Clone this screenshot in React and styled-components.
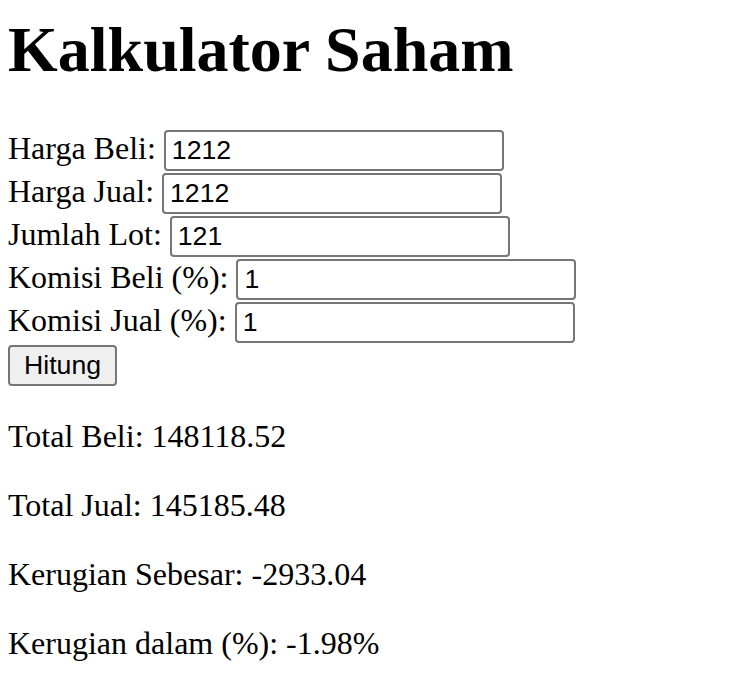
import React, { useState } from "react";
import styled, { createGlobalStyle } from "styled-components";

const GlobalStyle = createGlobalStyle`
    body {
        margin: 0;
        background: #ffffff;
        color: #000000;
        font-family: "Liberation Serif", "Times New Roman", serif;
    }
`;

const hitungSaham = (v) => {
    const beli = parseFloat(v.hargaBeli) || 0;
    const jual = parseFloat(v.hargaJual) || 0;
    const lot = parseFloat(v.jumlahLot) || 0;
    const kBeli = parseFloat(v.komisiBeli) || 0;
    const kJual = parseFloat(v.komisiJual) || 0;

    const totalBeli = beli * lot * (1 + kBeli / 100);
    const totalJual = jual * lot * (1 - kJual / 100);
    const selisih = totalJual - totalBeli;
    const persen = totalBeli ? (selisih / totalBeli) * 100 : 0;

    return { totalBeli, totalJual, selisih, persen };
};

const fields = [
    { name: "hargaBeli", label: "Harga Beli:" },
    { name: "hargaJual", label: "Harga Jual:" },
    { name: "jumlahLot", label: "Jumlah Lot:" },
    { name: "komisiBeli", label: "Komisi Beli (%):" },
    { name: "komisiJual", label: "Komisi Jual (%):" },
];

const initial = {
    hargaBeli: "1212",
    hargaJual: "1212",
    jumlahLot: "121",
    komisiBeli: "1",
    komisiJual: "1",
};

const App = () => {
    const [values, setValues] = useState(initial);
    const [hasil, setHasil] = useState(hitungSaham(initial));

    const handleChange = (e) => {
        setValues({ ...values, [e.target.name]: e.target.value });
    };

    const handleSubmit = (e) => {
        e.preventDefault();
        setHasil(hitungSaham(values));
    };

    const untung = hasil.selisih >= 0;

    return (
        <Page>
            <GlobalStyle />
            <Title>Kalkulator Saham</Title>

            <form onSubmit={handleSubmit}>
                {fields.map((f) => (
                    <Row key={f.name}>
                        <span>{f.label}</span>
                        <Input
                            type="text"
                            name={f.name}
                            value={values[f.name]}
                            onChange={handleChange}
                        />
                    </Row>
                ))}
                <ButtonRow>
                    <Button type="submit">Hitung</Button>
                </ButtonRow>
            </form>

            <Result>Total Beli: {Number(hasil.totalBeli.toFixed(2))}</Result>
            <Result>Total Jual: {Number(hasil.totalJual.toFixed(2))}</Result>
            <Result>
                {untung ? "Keuntungan" : "Kerugian"} Sebesar: {Number(hasil.selisih.toFixed(2))}
            </Result>
            <Result>
                {untung ? "Keuntungan" : "Kerugian"} dalam (%): {hasil.persen.toFixed(2)}%
            </Result>
        </Page>
    );
};

export default App;

const Page = styled.div`
    padding: 0 8px;
    font-size: 32px;
`;

const Title = styled.h1`
    font-size: 64px;
    font-weight: bold;
    margin: 13px 0 43px 0;
    line-height: normal;
`;

const Row = styled.label`
    display: flex;
    align-items: baseline;
    gap: 8px;
    height: 43px;
    white-space: nowrap;
`;

const Input = styled.input`
    box-sizing: border-box;
    width: 340px;
    height: 41px;
    margin: 0;
    padding: 0 6px;
    border: 2px solid #767676;
    border-radius: 4px;
    background: #ffffff;
    color: #000000;
    font-family: "Liberation Sans", Arial, sans-serif;
    font-size: 26.67px;
`;

const ButtonRow = styled.div`
    display: flex;
    height: 41px;
`;

const Button = styled.button`
    box-sizing: border-box;
    height: 41px;
    margin: 0;
    padding: 0 14px;
    border: 2px solid #767676;
    border-radius: 4px;
    background: #efefef;
    color: #000000;
    font-family: "Liberation Sans", Arial, sans-serif;
    font-size: 26.67px;
    cursor: pointer;
`;

const Result = styled.p`
    margin: 32px 0;
    line-height: normal;
`;
